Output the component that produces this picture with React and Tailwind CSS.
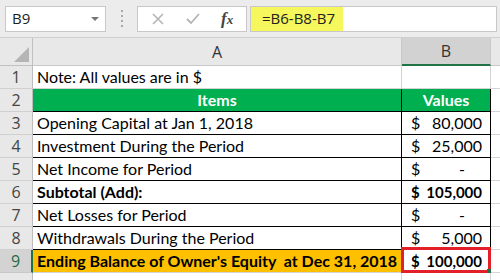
import React from "react";

const rows = [
  { n: 1, a: "Note: All values are in $", kind: "note" },
  { n: 2, a: "Items", b: "Values", kind: "head" },
  { n: 3, a: "Opening Capital at Jan 1, 2018", v: "80,000" },
  { n: 4, a: "Investment During the Period", v: "25,000" },
  { n: 5, a: "Net Income for Period", v: "-" },
  { n: 6, a: "Subtotal (Add):", v: "105,000", bold: true },
  { n: 7, a: "Net Losses for Period", v: "-" },
  { n: 8, a: "Withdrawals During the Period", v: "5,000" },
  { n: 9, a: "Ending Balance of Owner's Equity\u00a0 at Dec 31, 2018", v: "100,000", kind: "total" },
];

const cellFont = { fontFamily: "Lato, 'Liberation Sans', sans-serif" };
const uiFont = { fontFamily: "'Open Sans', 'Liberation Sans', sans-serif" };

const Amount = ({ v, bold }) => (
  <div
    className={`flex h-full items-center justify-between pl-[9px] pr-[8px] ${
      bold ? "font-bold text-[15px]" : "text-[16px]"
    }`}
  >
    <span>$</span>
    {v === "-" ? <span className="mr-[17px]">-</span> : <span>{v}</span>}
  </div>
);

const Row = ({ r }) => {
  const head = r.kind === "head";
  const note = r.kind === "note";
  const total = r.kind === "total";
  return (
    <div className="flex h-[23px]" style={cellFont}>
      <div
        className={`flex w-[33px] shrink-0 items-center justify-center border-b border-r text-[16px] ${
          total ? "bg-[#d3d3d3] border-b-[#c8c8c8] border-r-[#217346] border-r-2 text-[#1f6b3f]" : "bg-[#e8e8e8] border-b-[#d0d0d0] border-r-[#bdbdbd] text-[#444]"
        }`}
        style={uiFont}
      >
        {r.n}
      </div>
      <div
        className={`flex w-[369px] shrink-0 items-center border-b border-r text-[16px] ${
          note ? "border-[#d4d4d4] pl-[4px] text-black" : ""
        } ${head ? "justify-center bg-[#00b050] border-black font-bold text-white" : ""} ${
          total ? "bg-[#ffc000] border-[#d4d4d4] font-bold pl-[4px] text-black" : ""
        } ${!note && !head && !total ? "border-black pl-[4px] text-black" : ""} ${r.bold ? "font-bold" : ""}`}
      >
        {r.a}
      </div>
      <div
        className={`relative w-[89px] shrink-0 border-b border-r text-black ${
          note ? "border-[#d4d4d4]" : "border-black"
        } ${head ? "flex items-center justify-center bg-[#00b050] font-bold text-white text-[16px]" : ""}`}
      >
        {head && r.b}
        {r.v && <Amount v={r.v} bold={r.bold || total} />}
        {total && (
          <div className="absolute -left-px -top-[3px] h-[26px] w-[90px] border-[3px] border-[#e3202a]">
            <div className="absolute -bottom-[3px] -right-[3px] h-[4px] w-[4px] bg-[#217346]" />
          </div>
        )}
      </div>
      <div className={`flex-1 border-b border-[#d4d4d4]`} />
    </div>
  );
};

export default function App() {
  return (
    <div className="h-[280px] w-[500px] overflow-hidden bg-white">
      {/* formula bar */}
      <div className="flex h-[38px] items-center border-b border-[#cfcfcf] bg-[#ececec] pl-[5px]" style={uiFont}>
        <div className="flex h-[26px] w-[101px] items-center justify-between border border-[#c8c8c8] bg-white pl-[6px] pr-[6px] text-[15px] text-[#222]">
          <span>B9</span>
          <span className="h-0 w-0 border-x-[4px] border-t-[4px] border-x-transparent border-t-[#777]" />
        </div>
        <div className="flex w-[31px] flex-col items-center gap-[3px]">
          <span className="h-[2px] w-[2px] bg-[#a8a8a8]" />
          <span className="h-[2px] w-[2px] bg-[#a8a8a8]" />
          <span className="h-[2px] w-[2px] bg-[#a8a8a8]" />
          <span className="h-[2px] w-[2px] bg-[#a8a8a8]" />
        </div>
        <div className="flex h-[26px] w-[110px] items-center border border-[#c8c8c8] bg-white">
          <svg width="14" height="14" viewBox="0 0 14 14" className="ml-[13px]">
            <path d="M2 2 L12 12 M12 2 L2 12" stroke="#b4b4b4" strokeWidth="1.6" />
          </svg>
          <svg width="16" height="14" viewBox="0 0 16 14" className="ml-[20px]">
            <path d="M2 7 L6 11 L14 2" stroke="#b4b4b4" strokeWidth="1.8" fill="none" />
          </svg>
          <span
            className="ml-[20px] text-[17px] font-bold italic text-[#444]"
            style={{ fontFamily: "'Liberation Serif', serif" }}
          >
            f<span className="text-[13px]">x</span>
          </span>
        </div>
        <div className="ml-[3px] flex h-[26px] w-[247px] items-center border border-[#c8c8c8] bg-white">
          <div className="flex h-full w-[92px] items-center bg-[#f5f75c] pl-[11px] text-[15px] text-[#222]">=B6-B8-B7</div>
        </div>
      </div>
      {/* column headers */}
      <div className="flex h-[28px] bg-[#e8e8e8]" style={uiFont}>
        <div className="flex w-[33px] items-end justify-end border-b border-r border-[#c0c0c0] pb-[3px] pr-[3px]">
          <span className="h-0 w-0 border-b-[15px] border-l-[15px] border-b-[#b5b5b5] border-l-transparent" />
        </div>
        <div className="flex w-[369px] items-center justify-center border-b border-r border-[#c8c8c8] text-[16px] text-[#333]">
          A
        </div>
        <div className="flex w-[89px] items-center justify-center border-b-2 border-r border-b-[#217346] border-r-[#c8c8c8] bg-[#d2d2d2] text-[16px] text-[#333]">
          B
        </div>
        <div className="flex-1 border-b border-[#c8c8c8]" />
      </div>
      {rows.map((r) => (
        <Row key={r.n} r={r} />
      ))}
      <div className="flex h-[23px]">
        <div className="w-[33px] border-r border-[#bdbdbd] bg-[#e8e8e8]" />
        <div className="w-[369px] border-r border-[#d4d4d4]" />
        <div className="w-[89px] border-r border-[#d4d4d4]" />
      </div>
    </div>
  );
}
